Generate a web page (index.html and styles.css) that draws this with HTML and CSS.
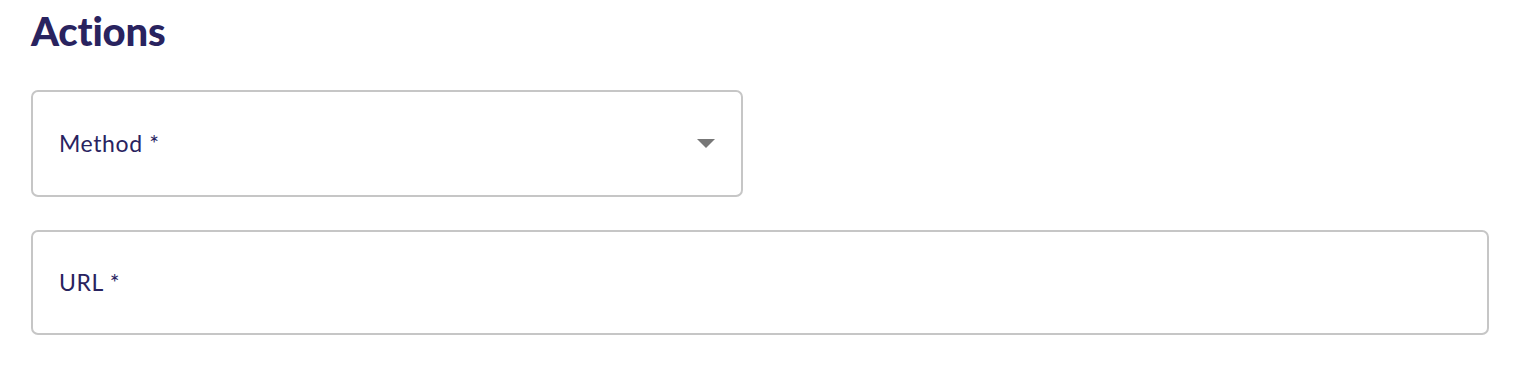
FILE: index.html
```html
<!DOCTYPE html>
<html lang="en">
<head>
    <meta charset="UTF-8">
    <meta name="viewport" content="width=device-width, initial-scale=1.0">
    <title>Actions</title>
    <link rel="stylesheet" href="styles.css">
</head>
<body>

    <div class="actions-section">
        <h2>Actions</h2>

        <div class="field field-select">
            <span class="field-label">Method *</span>
            <svg class="select-arrow" width="18" height="9" viewBox="0 0 18 9">
                <path d="M0 0 L18 0 L9 9 Z" fill="#777777"/>
            </svg>
        </div>

        <div class="field field-url">
            <span class="field-label">URL *</span>
        </div>
    </div>

</body>
</html>
```

FILE: styles.css
```css
:root {
    --primary-color: #29235f;
    --border-color: #c6c6c6;
}

body {
    font-family: 'Lato', sans-serif;
    background-color: #ffffff;
    color: var(--primary-color);
    margin: 0;
    padding: 0 29px 0 31px;
}

.actions-section h2 {
    font-size: 40px;
    font-weight: 900;
    margin: 0;
    padding-top: 8px;
    line-height: 47px;
    letter-spacing: -0.2px;
}

.field {
    box-sizing: border-box;
    border: 2px solid var(--border-color);
    border-radius: 7px;
    display: flex;
    align-items: center;
    padding: 0 26px 0 26px;
}

.field-select {
    margin-top: 35px;
    width: 712px;
    height: 107px;
    justify-content: space-between;
}

.field-url {
    margin-top: 33px;
    height: 105px;
}

.field-label {
    font-size: 23px;
    font-weight: 400;
    letter-spacing: 0.6px;
    font-family: 'Lato', sans-serif;
    color: var(--primary-color);
    padding-bottom: 2px;
}

.select-arrow {
    display: block;
    margin-right: 0;
}
```
